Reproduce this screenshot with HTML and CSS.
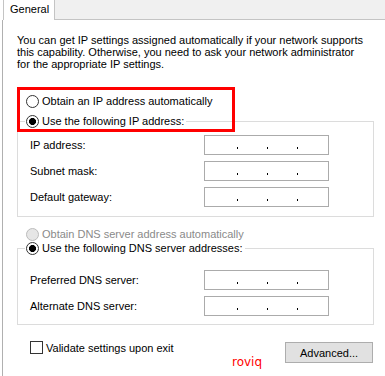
FILE: index.html
```html
<!DOCTYPE html>
<html>
<head>
<meta charset="utf-8">
<link rel="stylesheet" href="styles.css">
</head>
<body>
<div class="tabs">
  <div class="tab-gap"></div>
  <div class="tab">General</div>
  <div class="tab-fill"></div>
</div>
<div class="panel">
  <p class="desc">You can get IP settings assigned automatically if your network supports<br>this capability. Otherwise, you need to ask your network administrator<br>for the appropriate IP settings.</p>
  <div class="opt opt-first"><span class="radio"></span><span>Obtain an IP address automatically</span></div>
  <fieldset class="group g1">
    <legend><span class="lg"><span class="radio on"></span><span>Use the following IP address:</span></span></legend>
    <div class="field"><span class="lbl">IP address:</span><span class="ip"><i></i><i></i><i></i></span></div>
    <div class="field"><span class="lbl">Subnet mask:</span><span class="ip"><i></i><i></i><i></i></span></div>
    <div class="field"><span class="lbl">Default gateway:</span><span class="ip"><i></i><i></i><i></i></span></div>
  </fieldset>
  <div class="opt opt-dns disabled"><span class="radio"></span><span>Obtain DNS server address automatically</span></div>
  <fieldset class="group g2">
    <legend><span class="lg"><span class="radio on"></span><span>Use the following DNS server addresses:</span></span></legend>
    <div class="field"><span class="lbl">Preferred DNS server:</span><span class="ip"><i></i><i></i><i></i></span></div>
    <div class="field"><span class="lbl">Alternate DNS server:</span><span class="ip"><i></i><i></i><i></i></span></div>
  </fieldset>
  <div class="footer">
    <label class="check"><span class="box"></span><span>Validate settings upon exit</span></label>
    <button class="btn">Advanced...</button>
  </div>
  <div class="highlight"></div>
  <div class="mark">roviq</div>
</div>
</body>
</html>
```
FILE: styles.css
```css
* { box-sizing: border-box; }
html, body {
  margin: 0;
  padding: 0;
  background: #ffffff;
}
body {
  width: 385px;
  height: 376px;
  overflow: hidden;
  font-family: "Liberation Sans", Arial, sans-serif;
  font-size: 11px;
  color: #000;
}
.tabs {
  display: flex;
  height: 20px;
}
.tab-gap {
  width: 3px;
}
.tab {
  width: 52px;
  height: 20px;
  background: #fff;
  border-left: 1px solid #c4c4c4;
  border-right: 1px solid #c4c4c4;
  padding-left: 6px;
  line-height: 19px;
}
.tab-fill {
  flex: 1;
  background: #f0f0f0;
  border-bottom: 1px solid #c4c4c4;
}
.panel {
  position: relative;
  margin-left: 2px;
  height: 356px;
  border-left: 1px solid #b0b0b0;
  padding: 14px 0 0 14px;
}
.desc {
  margin: 0;
  line-height: 12px;
  white-space: nowrap;
}
.opt {
  display: flex;
  align-items: center;
  gap: 3px;
  height: 14px;
  line-height: 14px;
  padding-left: 9px;
}
.opt-first { margin-top: 24px; }
.opt-dns { margin-top: 10px; }
.disabled { color: #8a8a8a; }
.radio {
  display: inline-block;
  flex: none;
  width: 13px;
  height: 13px;
  border: 1px solid #333;
  border-radius: 50%;
  background: #fff;
}
.radio.on {
  background: radial-gradient(circle, #000 0 3.2px, #fff 3.8px);
}
.disabled .radio {
  border-color: #bcbcbc;
  background: #e6e6e6;
}
.group {
  width: 357px;
  margin: 0;
  min-width: 0;
  border: 1px solid #dcdcdc;
  padding: 7px 0 9px 7px;
}
.g1 { margin-top: 6px; }
.g2 { padding-top: 15px; padding-bottom: 8px; }
.group legend {
  padding: 0 2px 0 1px;
  line-height: 14px;
  height: 14px;
}
.lg {
  display: flex;
  align-items: center;
  gap: 3px;
  height: 14px;
}
.field {
  display: flex;
  align-items: center;
  height: 20px;
  padding-left: 5px;
  margin-bottom: 6px;
}
.field:last-child { margin-bottom: 0; }
.lbl {
  width: 174px;
  flex: none;
}
.ip {
  display: flex;
  align-items: flex-end;
  gap: 29px;
  width: 125px;
  height: 20px;
  border: 1px solid #ababab;
  padding: 0 0 5px 32px;
}
.ip i {
  display: block;
  width: 1px;
  height: 2px;
  background: #000;
}
.footer {
  display: flex;
  justify-content: space-between;
  align-items: flex-start;
  width: 356px;
  margin-top: 16px;
}
.check {
  display: flex;
  align-items: center;
  gap: 3px;
  height: 13px;
  padding-left: 13px;
}
.box {
  width: 13px;
  height: 13px;
  border: 1px solid #333;
  background: #fff;
}
.btn {
  width: 88px;
  height: 21px;
  margin-top: 1px;
  padding: 0;
  font: inherit;
  color: #000;
  background: #e1e1e1;
  border: 1px solid #adadad;
  border-radius: 0;
}
.highlight {
  position: absolute;
  left: 14px;
  top: 67px;
  width: 218px;
  height: 45px;
  border: 3px solid #ff0000;
}
.mark {
  position: absolute;
  left: 229px;
  top: 335px;
  font-family: "DejaVu Sans", sans-serif;
  font-size: 12px;
  line-height: 14px;
  color: #ff0000;
}
```
